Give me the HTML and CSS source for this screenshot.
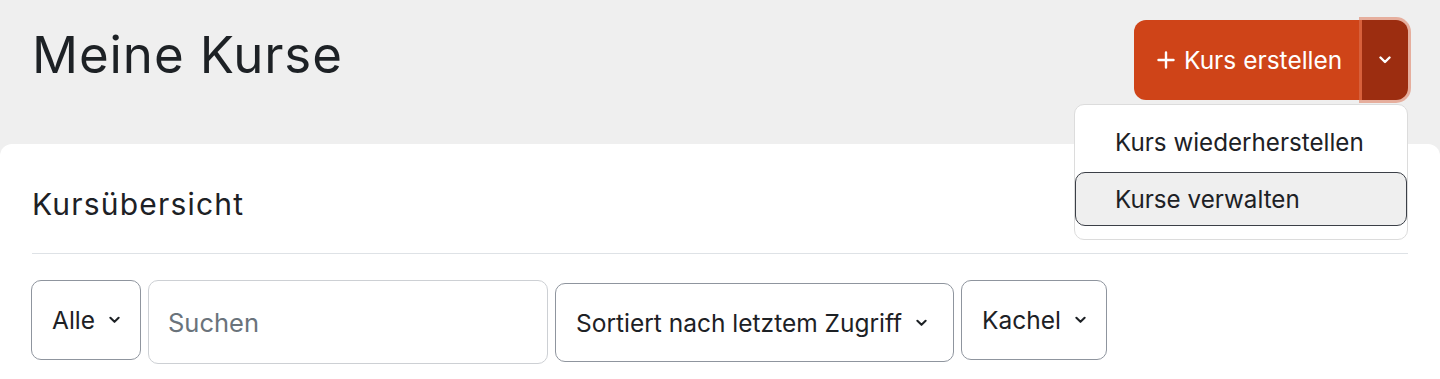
FILE: index.html
```html
<!DOCTYPE html>
<html lang="de">
<head>
    <meta charset="UTF-8">
    <meta name="viewport" content="width=device-width, initial-scale=1.0">
    <title>Meine Kurse</title>
    <link rel="stylesheet" href="styles.css">
</head>
<body>
    <header class="page-header">
        <h1>Meine Kurse</h1>
        <div class="create-group">
            <button class="btn-create">
                <svg class="plus" width="18" height="18" viewBox="0 0 18 18"><path d="M9 1.5v15M1.5 9h15" stroke="#ffffff" stroke-width="2.4" stroke-linecap="round"/></svg>
                Kurs erstellen
            </button>
            <button class="btn-toggle" aria-label="Weitere Aktionen">
                <svg width="12" height="8" viewBox="0 0 12 8"><polyline points="1.5,1.5 6,6 10.5,1.5" fill="none" stroke="#ffffff" stroke-width="2.4" stroke-linecap="round" stroke-linejoin="round"/></svg>
            </button>
            <div class="create-menu">
                <a class="menu-item" href="#">Kurs wiederherstellen</a>
                <a class="menu-item active" href="#">Kurse verwalten</a>
            </div>
        </div>
    </header>
    <main class="card">
        <h2 class="card-title">Kursübersicht</h2>
        <div class="filters">
            <button class="select select-all">Alle
                <svg class="chev" width="12" height="8" viewBox="0 0 12 8"><polyline points="1.5,1.5 6,6 10.5,1.5" fill="none" stroke="#1d2125" stroke-width="2.2" stroke-linecap="round" stroke-linejoin="round"/></svg>
            </button>
            <input class="search" type="text" placeholder="Suchen">
            <button class="select select-sort">Sortiert nach letztem Zugriff
                <svg class="chev" width="12" height="8" viewBox="0 0 12 8"><polyline points="1.5,1.5 6,6 10.5,1.5" fill="none" stroke="#1d2125" stroke-width="2.2" stroke-linecap="round" stroke-linejoin="round"/></svg>
            </button>
            <button class="select select-view">Kachel
                <svg class="chev" width="12" height="8" viewBox="0 0 12 8"><polyline points="1.5,1.5 6,6 10.5,1.5" fill="none" stroke="#1d2125" stroke-width="2.2" stroke-linecap="round" stroke-linejoin="round"/></svg>
            </button>
        </div>
    </main>
</body>
</html>
```

FILE: styles.css
```css
* {
    margin: 0;
    padding: 0;
    box-sizing: border-box;
}

body {
    background-color: #efefef;
    color: #1d2125;
    font-family: Inter, 'Noto Sans', sans-serif;
    height: 100vh;
    overflow: hidden;
}

.page-header {
    display: flex;
    justify-content: space-between;
    align-items: flex-start;
    padding: 20px 32px 0 32px;
    height: 144px;
}

    .page-header h1 {
        font-size: 51px;
        font-weight: 400;
        line-height: 1;
        margin-top: 9px;
        letter-spacing: 0.9px;
    }

.create-group {
    position: relative;
    display: flex;
    height: 80px;
}

.btn-create {
    display: flex;
    align-items: center;
    gap: 9px;
    padding: 0 18px 0 23px;
    width: 228px;
    background-color: #cf4418;
    color: #ffffff;
    border: none;
    border-radius: 12px 0 0 12px;
    font-family: inherit;
    font-size: 24.5px;
    white-space: nowrap;
    cursor: pointer;
}

    .btn-create .plus {
        flex-shrink: 0;
    }

.btn-toggle {
    width: 46px;
    background-color: #9c2d10;
    border: none;
    border-radius: 0 12px 12px 0;
    box-shadow: 0 0 0 3px rgba(222, 120, 90, 0.55);
    display: flex;
    align-items: center;
    justify-content: center;
    cursor: pointer;
}

.create-menu {
    position: absolute;
    top: 84px;
    right: 0;
    width: 334px;
    height: 136px;
    background-color: #ffffff;
    border: 1px solid #dcdcdc;
    border-radius: 10px;
    padding: 10px 0 13px 0;
    display: flex;
    flex-direction: column;
    justify-content: flex-end;
    z-index: 5;
}

.menu-item {
    display: flex;
    align-items: center;
    height: 54px;
    padding: 0 39px;
    color: #1d2125;
    text-decoration: none;
    font-size: 24.2px;
    border: 1px solid transparent;
    border-radius: 10px;
}

    .menu-item:first-child {
        height: 57px;
        padding-bottom: 3px;
    }

    .menu-item.active {
        background-color: #efefef;
        border-color: #3b3f47;
    }

.card {
    background-color: #ffffff;
    border-radius: 12px 12px 0 0;
    padding: 44px 32px 0 32px;
    height: 235px;
}

.card-title {
    font-size: 30px;
    font-weight: 400;
    line-height: 33px;
    padding-bottom: 32px;
    border-bottom: 1px solid #dee2e6;
    letter-spacing: 1.2px;
}

.filters {
    display: flex;
    align-items: flex-start;
    gap: 7px;
    margin-top: 26px;
    margin-left: -1px;
}

.select {
    display: flex;
    align-items: center;
    gap: 14px;
    height: 80px;
    padding: 0 20px 0 20px;
    background-color: #ffffff;
    color: #1d2125;
    border: 1px solid #8f959e;
    border-radius: 10px;
    font-family: inherit;
    font-size: 24.5px;
    white-space: nowrap;
    cursor: pointer;
}

    .select .chev {
        flex-shrink: 0;
        width: 11px;
    }

.select-all {
    width: 110px;
}

.select-sort {
    width: 399px;
    height: 79px;
    margin-top: 3px;
}

.select-view {
    width: 146px;
}

.search {
    width: 400px;
    height: 84px;
    padding: 0 19px;
    border: 1px solid #cdd0d4;
    border-radius: 10px;
    font-family: inherit;
    font-size: 25.5px;
    color: #1d2125;
    outline: none;
}

    .search::placeholder {
        color: #6a737b;
    }
```
